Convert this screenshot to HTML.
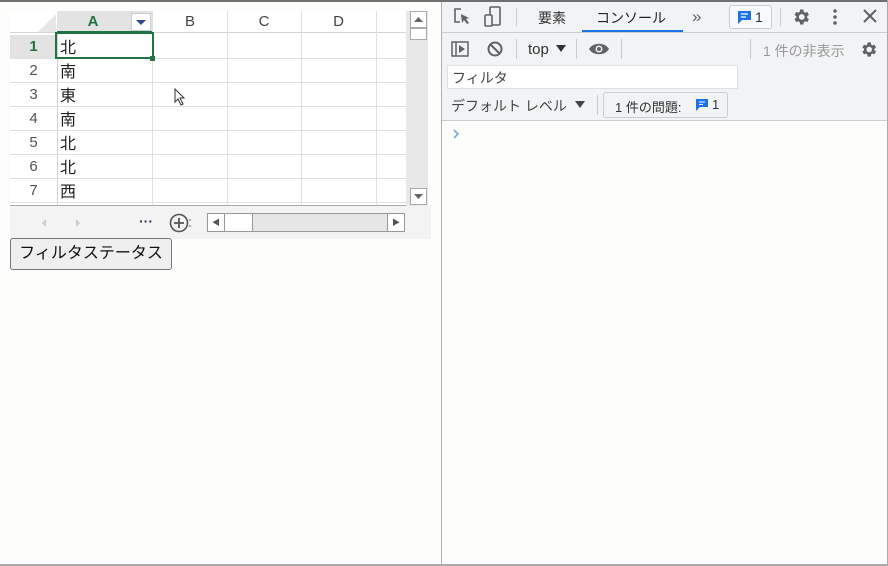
<!DOCTYPE html>
<html><head><meta charset="utf-8"><style>
*{margin:0;padding:0;box-sizing:border-box}
body{width:888px;height:566px;background:#fdfdfc;position:relative;overflow:hidden;font-family:"Liberation Sans","Noto Sans CJK JP",sans-serif}
.a{position:absolute}
.t{font-size:14px;color:#333}
</style></head><body>
<div class="a" style="left:0;top:0;width:888px;height:2px;background:#707070"></div>
<div class="a" style="left:887px;top:0;width:1px;height:566px;background:#aaa"></div>
<div class="a" style="left:0;top:564px;width:888px;height:2px;background:#aaa"></div>
<!-- spreadsheet -->
<div class="a" style="left:10px;top:11px;width:396px;height:195px;background:#fff"></div>
<div class="a" style="left:10px;top:11px;width:396px;height:22px;background:#fff;border-bottom:1px solid #d4d4d4"></div>
<svg class="a" style="left:36px;top:14px" width="20" height="18"><polygon points="20,0 20,18 2,18" fill="#e6e6e6"/></svg>
<div class="a" style="left:57px;top:11px;width:96px;height:22px;background:#e3e3e3;border-bottom:2px solid #217346"></div>
<div class="a" style="left:57px;top:13px;width:72px;text-align:center;font-size:15px;font-weight:bold;color:#217346">A</div>
<div class="a" style="left:131px;top:13px;width:20px;height:18px;background:#fff;border:1px solid #ccc"></div>
<svg class="a" style="left:136px;top:20px" width="10" height="6"><polygon points="0,0 10,0 5,5" fill="#2a4a8a"/></svg>
<div class="a" style="left:153px;top:13px;width:74px;text-align:center;color:#444;font-size:15px">B</div>
<div class="a" style="left:227px;top:13px;width:74px;text-align:center;color:#444;font-size:15px">C</div>
<div class="a" style="left:301px;top:13px;width:75px;text-align:center;color:#444;font-size:15px">D</div>
<div class="a" style="left:152px;top:11px;width:1px;height:195px;background:#e1e1e1"></div>
<div class="a" style="left:227px;top:11px;width:1px;height:195px;background:#e1e1e1"></div>
<div class="a" style="left:301px;top:11px;width:1px;height:195px;background:#e1e1e1"></div>
<div class="a" style="left:376px;top:11px;width:1px;height:195px;background:#e1e1e1"></div>
<div class="a" style="left:57px;top:33px;width:1px;height:173px;background:#d4d4d4"></div>
<div class="a" style="left:10px;top:35px;width:47px;height:23px;background:#e3e3e3"></div>
<div id="rows"></div>
<script>
var d=["北","南","東","南","北","北","西"],h="";
for(var i=0;i<7;i++){var y=35+i*24;
h+='<div class="a" style="left:10px;top:'+(y+23)+'px;width:396px;height:1px;background:#e1e1e1"></div>';
h+='<div class="a" style="left:10px;top:'+(y+3)+'px;width:47px;text-align:center;font-size:15px;'+(i==0?'font-weight:bold;color:#217346':'color:#555')+'">'+(i+1)+'</div>';
h+='<div class="a" style="left:60px;top:'+(y-1)+'px;font-size:16px;color:#222">'+d[i]+'</div>';}
document.getElementById('rows').innerHTML=h;
</script>
<div class="a" style="left:55px;top:32px;width:99px;height:27px;border:2px solid #217346"></div>
<div class="a" style="left:150px;top:56px;width:5px;height:5px;background:#217346"></div>
<svg class="a" style="left:174px;top:88px" width="12" height="18"><path d="M1 1 L1 14 L4 11 L7 17 L9 16 L6 10 L10 10 Z" fill="#fff" stroke="#333"/></svg>
<!-- vscroll -->
<div class="a" style="left:406px;top:11px;width:22px;height:195px;background:#e8e8e8"></div>
<div class="a" style="left:410px;top:11px;width:17px;height:17px;background:#fff;border:1px solid #aaa"></div>
<svg class="a" style="left:414px;top:17px" width="9" height="5"><polygon points="0,5 9,5 4.5,0" fill="#666"/></svg>
<div class="a" style="left:410px;top:28px;width:17px;height:12px;background:#fff;border:1px solid #aaa"></div>
<div class="a" style="left:410px;top:188px;width:17px;height:17px;background:#fff;border:1px solid #aaa"></div>
<svg class="a" style="left:414px;top:194px" width="9" height="5"><polygon points="0,0 9,0 4.5,5" fill="#666"/></svg>
<div class="a" style="left:10px;top:205px;width:396px;height:1px;background:#aaa"></div>
<!-- bottom bar -->
<div class="a" style="left:10px;top:206px;width:421px;height:33px;background:#f3f3f3"></div>
<svg class="a" style="left:40px;top:218px" width="40" height="10"><polygon points="6,1 6,9 2,5" fill="#ccc"/><polygon points="36,1 36,9 40,5" fill="#ccc"/></svg>
<div class="a" style="left:139px;top:213px;font-size:14px;font-weight:bold;color:#335">···</div>
<svg class="a" style="left:169px;top:212px" width="24" height="22"><circle cx="10" cy="11" r="8.5" fill="none" stroke="#555" stroke-width="1.6"/><path d="M10 6v10M5 11h10" stroke="#555" stroke-width="1.8"/><circle cx="21" cy="8" r="1" fill="#999"/><circle cx="21" cy="14" r="1" fill="#999"/></svg>
<div class="a" style="left:207px;top:213px;width:198px;height:19px;background:#e6e6e6;border:1px solid #999"></div>
<div class="a" style="left:208px;top:214px;width:17px;height:17px;background:#fff;border-right:1px solid #999;font-size:8px;color:#555;text-align:center;line-height:17px">◀</div>
<div class="a" style="left:225px;top:214px;width:28px;height:17px;background:#fff;border-right:1px solid #999"></div>
<div class="a" style="left:387px;top:214px;width:17px;height:17px;background:#fff;border-left:1px solid #999;font-size:8px;color:#555;text-align:center;line-height:17px">▶</div>
<div class="a" style="left:10px;top:238px;width:162px;height:32px;background:#efefef;border:1px solid #767676;border-radius:3px;font-size:16px;color:#111;line-height:30px;text-align:center">フィルタステータス</div>
<!-- devtools -->
<div class="a" style="left:441px;top:2px;width:1px;height:564px;background:#b0b0b0"></div>
<div class="a" style="left:442px;top:2px;width:445px;height:119px;background:#f1f3f4;border-bottom:1px solid #cacdd1"></div>
<div class="a" style="left:442px;top:32px;width:445px;height:1px;background:#cacdd1"></div>
<svg class="a" style="left:452px;top:7px" width="20" height="20"><path d="M9 2H3v13h5" fill="none" stroke="#5f6368" stroke-width="1.6"/><path d="M9 7l8 4-3 1 3 4-2 1-3-4-2 3z" fill="#5f6368"/></svg>
<svg class="a" style="left:484px;top:6px" width="18" height="22"><rect x="6" y="1" width="10" height="18" rx="1" fill="none" stroke="#5f6368" stroke-width="1.6"/><rect x="1" y="9" width="7" height="11" rx="1" fill="#f1f3f4" stroke="#5f6368" stroke-width="1.6"/></svg>
<div class="a" style="left:516px;top:8px;width:1px;height:18px;background:#ccc"></div>
<div class="a t" style="left:538px;top:8px;color:#333">要素</div>
<div class="a t" style="left:596px;top:8px;color:#222">コンソール</div>
<div class="a" style="left:582px;top:30px;width:101px;height:2px;background:#1a73e8"></div>
<div class="a" style="left:692px;top:7px;font-size:17px;color:#5f6368">»</div>
<div class="a" style="left:729px;top:5px;width:43px;height:24px;border:1px solid #cacdd1;border-radius:3px;background:#f8f9fa"></div>
<svg class="a" style="left:738px;top:11px" width="14" height="13"><path d="M0 0h13v9H4l-4 4z" fill="#1a73e8"/><path d="M3 3h7M3 6h5" stroke="#fff" stroke-width="1.2"/></svg>
<div class="a t" style="left:755px;top:9px;color:#333">1</div>
<div class="a" style="left:780px;top:8px;width:1px;height:18px;background:#ccc"></div>
<svg class="a" style="left:791px;top:7px" width="20" height="20" viewBox="0 0 24 24"><path fill="#5f6368" d="M19.4 13a7.5 7.5 0 000-2l2.1-1.6-2-3.5-2.5 1a7 7 0 00-1.7-1L14.9 3h-4l-.4 2.9a7 7 0 00-1.7 1l-2.5-1-2 3.5L6.4 11a7.5 7.5 0 000 2l-2.1 1.6 2 3.5 2.5-1a7 7 0 001.7 1l.4 2.9h4l.4-2.9a7 7 0 001.7-1l2.5 1 2-3.5zM12.9 15.5a3.5 3.5 0 110-7 3.5 3.5 0 010 7z"/></svg>
<svg class="a" style="left:832px;top:8px" width="6" height="18"><circle cx="3" cy="3" r="1.8" fill="#5f6368"/><circle cx="3" cy="9" r="1.8" fill="#5f6368"/><circle cx="3" cy="15" r="1.8" fill="#5f6368"/></svg>
<svg class="a" style="left:863px;top:9px" width="14" height="14"><path d="M1 1l12 12M13 1L1 13" stroke="#5f6368" stroke-width="2"/></svg>
<!-- row 2 -->
<svg class="a" style="left:451px;top:41px" width="18" height="16"><rect x="1" y="1" width="16" height="14" fill="none" stroke="#5f6368" stroke-width="1.5"/><path d="M5 1v14" stroke="#5f6368" stroke-width="1.5"/><path d="M8 4l6 4-6 4z" fill="#5f6368"/></svg>
<svg class="a" style="left:487px;top:41px" width="16" height="16"><circle cx="8" cy="8" r="6.5" fill="none" stroke="#5f6368" stroke-width="2"/><path d="M3.5 3.5l9 9" stroke="#5f6368" stroke-width="2"/></svg>
<div class="a" style="left:516px;top:39px;width:1px;height:20px;background:#ccc"></div>
<div class="a" style="left:528px;top:41px;font-size:15px;color:#333">top</div>
<svg class="a" style="left:556px;top:45px" width="10" height="8"><polygon points="0,0 10,0 5,7" fill="#333"/></svg>
<div class="a" style="left:576px;top:39px;width:1px;height:20px;background:#ccc"></div>
<svg class="a" style="left:588px;top:42px" width="22" height="14"><path d="M1 7C5 0 17 0 21 7 17 14 5 14 1 7z" fill="#5f6368"/><circle cx="11" cy="7" r="3.5" fill="#f1f3f4"/><circle cx="11" cy="7" r="2" fill="#5f6368"/></svg>
<div class="a" style="left:621px;top:39px;width:1px;height:20px;background:#ccc"></div>
<div class="a" style="left:750px;top:39px;width:1px;height:20px;background:#ccc"></div>
<div class="a t" style="left:763px;top:41px;color:#999">1 件の非表示</div>
<svg class="a" style="left:859px;top:40px" width="19" height="19" viewBox="0 0 24 24"><path fill="#5f6368" d="M19.4 13a7.5 7.5 0 000-2l2.1-1.6-2-3.5-2.5 1a7 7 0 00-1.7-1L14.9 3h-4l-.4 2.9a7 7 0 00-1.7 1l-2.5-1-2 3.5L6.4 11a7.5 7.5 0 000 2l-2.1 1.6 2 3.5 2.5-1a7 7 0 001.7 1l.4 2.9h4l.4-2.9a7 7 0 001.7-1l2.5 1 2-3.5zM12.9 15.5a3.5 3.5 0 110-7 3.5 3.5 0 010 7z"/></svg>
<div class="a" style="left:447px;top:65px;width:291px;height:24px;background:#fff;border:1px solid #e0e0e0"></div>
<div class="a t" style="left:452px;top:68px;color:#444">フィルタ</div>
<div class="a t" style="left:451px;top:96px;color:#444">デフォルト レベル</div>
<svg class="a" style="left:575px;top:101px" width="10" height="8"><polygon points="0,0 10,0 5,7" fill="#444"/></svg>
<div class="a" style="left:597px;top:95px;width:1px;height:20px;background:#ccc"></div>
<div class="a" style="left:603px;top:92px;width:125px;height:26px;border:1px solid #cacdd1;border-radius:3px;background:#f1f3f4"></div>
<div class="a" style="left:615px;top:97px;font-size:13px;color:#333">1 件の問題:</div>
<svg class="a" style="left:696px;top:99px" width="13" height="12"><path d="M0 0h12v8H4l-4 4z" fill="#1a73e8"/><path d="M3 3h6M3 5.5h4" stroke="#fff" stroke-width="1.1"/></svg>
<div class="a" style="left:712px;top:97px;font-size:13px;color:#333">1</div>
<svg class="a" style="left:453px;top:129px" width="7" height="10"><path d="M1 1l4 4-4 4" fill="none" stroke="#7aa7e8" stroke-width="1.6"/></svg>
</body></html>
